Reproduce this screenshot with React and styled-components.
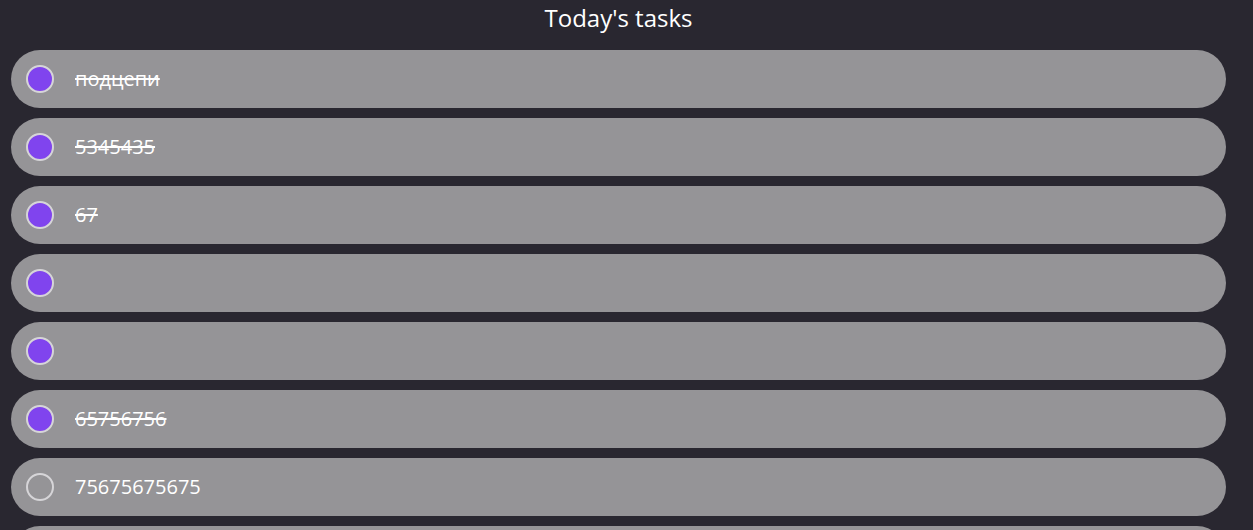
import React from 'react';
import styled, { createGlobalStyle } from 'styled-components';

const GlobalStyle = createGlobalStyle`
  html, body {
    margin: 0;
    padding: 0;
    background: #292730;
    overflow: hidden;
  }
`;

const StyledTasks = styled.section`
  width: calc(100% - 16px);
  box-sizing: border-box;
  padding: 0 11px;
  font-family: 'Open Sans', 'Noto Sans', sans-serif;
  color: #ffffff;
  .Tasks__Title {
    margin: 0;
    height: 50px;
    padding-top: 1px;
    box-sizing: border-box;
    text-align: center;
    font-size: 24px;
    font-weight: 400;
    line-height: 33px;
  }
  .Tasks__List {
    list-style: none;
    margin: 0;
    padding: 0;
    display: flex;
    flex-direction: column;
    gap: 10px;
  }
`;

const Task = styled.li`
  display: flex;
  align-items: center;
  height: 58px;
  padding-left: 15px;
  border-radius: 29px;
  background: #959497;
  .Task__Check {
    width: 28px;
    height: 28px;
    box-sizing: border-box;
    border-radius: 50%;
    border: 2px solid #d6d5d8;
    background: ${p => (p.done ? '#8044ee' : 'transparent')};
    flex-shrink: 0;
  }
  .Task__Text {
    margin-left: 21px;
    margin-bottom: 2px;
    font-size: 20px;
    line-height: 27px;
    text-decoration: ${p => (p.done ? 'line-through' : 'none')};
  }
`;

const tasks = [
  { text: 'подцепи', done: true },
  { text: '5345435', done: true },
  { text: '67', done: true },
  { text: '', done: true },
  { text: '', done: true },
  { text: '65756756', done: true },
  { text: '75675675675', done: false },
  { text: '', done: false },
];

const App = () => (
  <>
    <GlobalStyle />
    <StyledTasks>
      <h2 className="Tasks__Title">Today's tasks</h2>
      <ul className="Tasks__List">
        {tasks.map((t, i) => (
          <Task key={i} done={t.done}>
            <span className="Task__Check" />
            <span className="Task__Text">{t.text}</span>
          </Task>
        ))}
      </ul>
    </StyledTasks>
  </>
);

export default App;
